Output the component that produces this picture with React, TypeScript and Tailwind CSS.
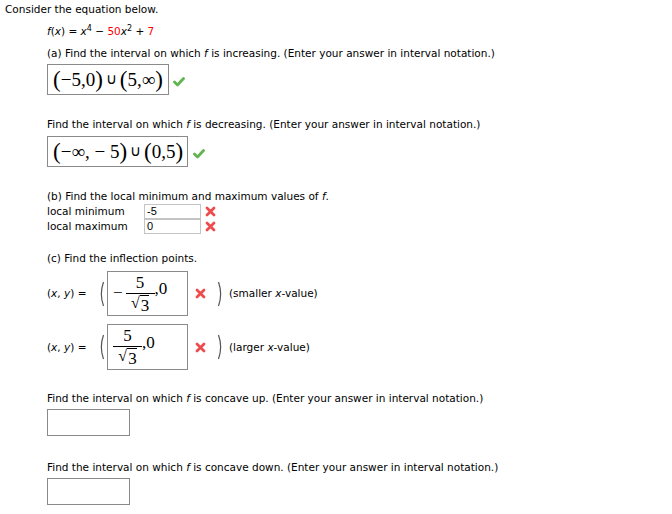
import React from "react";

const Check = () => (
  <svg width="12" height="11" viewBox="0 0 12 11" className="shrink-0">
    <path d="M1.5 6 L4.5 9 L10.5 2.5" fill="none" stroke="#62b451" strokeWidth="2.8" strokeLinecap="round" strokeLinejoin="round" />
  </svg>
);

const Cross = () => (
  <svg width="11" height="11" viewBox="0 0 11 11" className="shrink-0">
    <path d="M2 2 L9 9 M9 2 L2 9" fill="none" stroke="#ee4c4c" strokeWidth="2.8" strokeLinecap="round" />
  </svg>
);

const BigParen = ({ close }: { close?: boolean }) => (
  <svg width="7" height="26" viewBox="0 0 7 26" className="shrink-0">
    {close ? (
      <path d="M1.5 1 Q5.8 13 1.5 25" fill="none" stroke="#555" strokeWidth="1.2" />
    ) : (
      <path d="M5.5 1 Q1.2 13 5.5 25" fill="none" stroke="#555" strokeWidth="1.2" />
    )}
  </svg>
);

const Frac = ({ neg }: { neg?: boolean }) => (
  <div className="flex items-center font-['Liberation_Serif'] text-[17px] leading-none text-black">
    {neg && <span className="mr-[3px] -mt-[2px]">−</span>}
    <div className="flex flex-col items-center">
      <span className="pb-[2px]">5</span>
      <div className="h-[1px] w-[29px] bg-black"></div>
      <span className="flex items-start pt-[1px]">
        <span className="text-[16px] font-['Liberation_Serif']">√</span>
        <span className="border-t border-black pl-[1px] pt-[1px]">3</span>
      </span>
    </div>
    <span className="-mt-[10px]">,0</span>
  </div>
);

const InflRow = ({ neg, label, h }: { neg?: boolean; label: string; h: string }) => (
  <div className="flex items-center">
    <span className="w-[51px]">
      (<i>x</i>, <i>y</i>) =
    </span>
    <BigParen />
    <div className={`ml-[2px] w-[81px] ${h} border border-[#8a8a8a] flex items-center pl-[5px]`}>
      <Frac neg={neg} />
    </div>
    <span className="ml-[7px]">
      <Cross />
    </span>
    <span className="ml-[11px]">
      <BigParen close />
    </span>
    <span className="ml-[5px]">
      ({label} <i>x</i>-value)
    </span>
  </div>
);

export default function App() {
  return (
    <div className="w-[672px] h-[514px] bg-white text-black font-['DejaVu_Sans',sans-serif] text-[10.5px] leading-[13px] overflow-hidden">
      <p className="pl-[5px] pt-[3px]">Consider the equation below.</p>
      <div className="pl-[47px]">
        <p className="mt-[9px]">
          <i>f</i>(<i>x</i>) = <i>x</i>
          <sup className="text-[8px]">4</sup> − <span className="text-[#ff0000]">50</span>
          <i>x</i>
          <sup className="text-[8px]">2</sup> + <span className="text-[#ff0000]">7</span>
        </p>
        <p className="mt-[9px]">
          (a) Find the interval on which <i>f</i> is increasing. (Enter your answer in interval notation.)
        </p>
        <div className="mt-[4px] flex items-center">
          <div className="w-[122px] h-[31px] border border-[#8a8a8a] flex items-center pl-[5px] font-['Liberation_Serif'] text-[19px] leading-none">
            <span className="text-[23px]">(</span>−5,0<span className="text-[23px]">)</span>
            <span className="mx-[3px] text-[15px]">∪</span>
            <span className="text-[23px]">(</span>5,∞<span className="text-[23px]">)</span>
          </div>
          <span className="ml-[4px] mt-[4px]">
            <Check />
          </span>
        </div>
        <p className="mt-[23px]">
          Find the interval on which <i>f</i> is decreasing. (Enter your answer in interval notation.)
        </p>
        <div className="mt-[5px] flex items-center">
          <div className="w-[141px] h-[31px] border border-[#8a8a8a] flex items-center pl-[5px] font-['Liberation_Serif'] text-[19px] leading-none">
            <span className="text-[23px]">(</span>−∞, − 5<span className="text-[23px]">)</span>
            <span className="mx-[3px] text-[15px]">∪</span>
            <span className="text-[23px]">(</span>0,5<span className="text-[23px]">)</span>
          </div>
          <span className="ml-[5px] mt-[4px]">
            <Check />
          </span>
        </div>
        <p className="mt-[23px]">
          (b) Find the local minimum and maximum values of <i>f</i>.
        </p>
        <div className="mt-[1px] flex items-center h-[15px]">
          <span className="w-[97px]">local minimum</span>
          <div className="w-[57px] h-[15px] border border-[#c4c4c4] text-[11px] leading-[13px] pl-[2px] font-['Liberation_Sans']">-5</div>
          <span className="ml-[4px]">
            <Cross />
          </span>
        </div>
        <div className="flex items-center h-[15px]">
          <span className="w-[97px]">local maximum</span>
          <div className="w-[57px] h-[15px] border border-[#c4c4c4] text-[11px] leading-[13px] pl-[2px] font-['Liberation_Sans']">0</div>
          <span className="ml-[4px]">
            <Cross />
          </span>
        </div>
        <p className="mt-[18px]">(c) Find the inflection points.</p>
        <div className="mt-[6px]">
          <InflRow neg label="smaller" h="h-[45px]" />
        </div>
        <div className="mt-[8px]">
          <InflRow label="larger" h="h-[46px]" />
        </div>
        <p className="mt-[22px]">
          Find the interval on which <i>f</i> is concave up. (Enter your answer in interval notation.)
        </p>
        <div className="mt-[4px] w-[83px] h-[27px] border border-[#8a8a8a]"></div>
        <p className="mt-[25px]">
          Find the interval on which <i>f</i> is concave down. (Enter your answer in interval notation.)
        </p>
        <div className="mt-[4px] w-[83px] h-[27px] border border-[#8a8a8a]"></div>
      </div>
    </div>
  );
}
